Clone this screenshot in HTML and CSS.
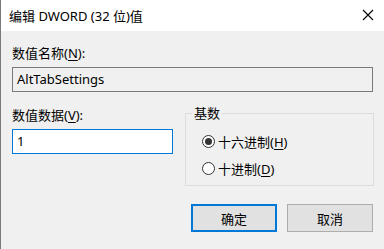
FILE: index.html
```html
<!DOCTYPE html>
<html>
<head>
<meta charset="utf-8">
<link rel="stylesheet" href="styles.css">
</head>
<body>
<div class="window">
  <div class="titlebar">
    <span class="title">编辑 DWORD (32 位)值</span>
    <svg class="close" width="12" height="12" viewBox="0 0 12 12"><path d="M1 1 L11 11 M11 1 L1 11" stroke="#000" stroke-width="1.1" fill="none"/></svg>
  </div>
  <div class="content">
    <div class="label first">数值名称(<u>N</u>):</div>
    <div class="textbox readonly">AltTabSettings</div>
    <div class="row">
      <div class="col">
        <div class="label">数值数据(<u>V</u>):</div>
        <div class="textbox focused">1</div>
      </div>
      <fieldset class="group">
        <legend>基数</legend>
        <div class="radio"><span class="dot checked"></span><span>十六进制(<u>H</u>)</span></div>
        <div class="radio"><span class="dot"></span><span>十进制(<u>D</u>)</span></div>
      </fieldset>
    </div>
    <div class="buttons">
      <div class="btn default">确定</div>
      <div class="btn">取消</div>
    </div>
  </div>
</div>
</body>
</html>
```
FILE: styles.css
```css
html, body { margin: 0; padding: 0; }
body {
  width: 384px; height: 249px; overflow: hidden;
  font-family: "Noto Sans", "Noto Sans CJK SC", sans-serif;
  font-size: 13px; color: #000;
}
.window { width: 384px; height: 249px; background: #f0f0f0; border-left: 1px solid #7a7a7a; box-sizing: border-box; }
.titlebar {
  height: 31px; background: #fff; display: flex; align-items: center;
  padding-left: 8px; padding-right: 10px; justify-content: space-between;
}
.title { font-size: 13px; line-height: 16px; }
.close { display: block; margin-top: -1px; }
.content { padding: 0 11px 0 11px; }
.label { line-height: 16px; height: 16px; }
.label.first { padding-top: 14px; margin-bottom: 6px; }
u { text-decoration-thickness: 1px; text-underline-offset: 2px; }
.textbox {
  height: 25px; box-sizing: border-box; border: 1px solid #7a7a7a;
  padding: 0 4px; line-height: 23px; display: flex; align-items: center;
}
.textbox.readonly { background: #f0f0f0; }
.textbox.focused { background: #fff; border-color: #0078d7; }
.row { display: flex; gap: 12px; margin-top: 0; align-items: flex-start; }
.col { width: 161px; padding-top: 15px; }
.col .label { margin-bottom: 6px; }
.group {
  flex: 1; margin: 13px -1px 0 0; padding: 0 6px 0 16px;
  border: 1px solid #dcdcdc; height: 81px; box-sizing: border-box; min-width: 0;
}
.group legend { padding: 0 2px; margin-left: -10px; line-height: 16px; }
.radio { display: flex; align-items: center; height: 16px; gap: 3px; margin-top: 12px; }
.radio + .radio { margin-top: 11px; }
.dot {
  width: 13px; height: 13px; box-sizing: border-box; border: 1px solid #333;
  border-radius: 50%; background: #fff; position: relative; flex: none;
}
.dot.checked::after {
  content: ""; position: absolute; left: 2px; top: 2px; width: 7px; height: 7px;
  border-radius: 50%; background: #333;
}
.buttons { display: flex; justify-content: flex-end; gap: 10px; margin-top: 18px; }
.btn {
  width: 86px; height: 28px; box-sizing: border-box; background: #e1e1e1;
  border: 1px solid #adadad; display: flex; align-items: center; justify-content: center;
}
.btn.default { border: 2px solid #0078d7; }
```
